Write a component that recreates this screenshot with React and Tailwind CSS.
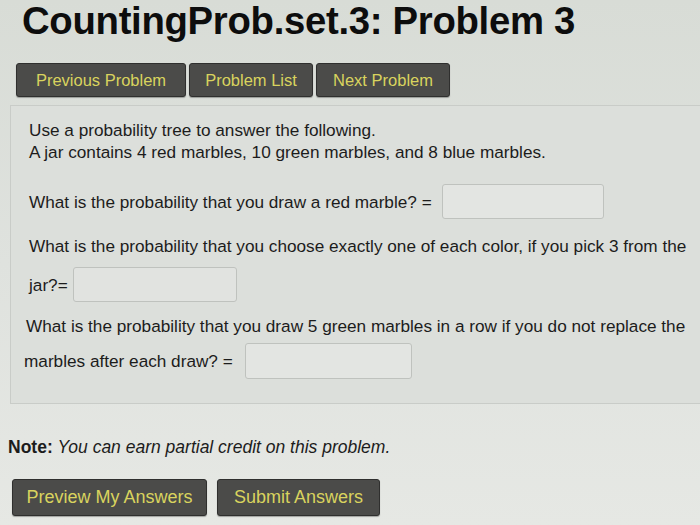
export default function App() {
  const btn =
    "bg-[#4b4b49] text-[#d9d35e] border border-[#2f2f2e] rounded-[3px] shadow-[0_1px_1px_rgba(0,0,0,0.3)]";
  return (
    <div
      className="w-[700px] h-[525px] overflow-hidden bg-gradient-to-b from-[#d8dcd6] via-[#dfe2de] to-[#e6e8e4] text-[#1c1c1c]"
      style={{ fontFamily: '"Liberation Sans", Arial, sans-serif' }}
    >
      <h1 className="pl-[22px] pt-[0px] text-[38.3px] leading-[42px] font-bold text-[#0d0d0d] tracking-[-0.3px]">
        CountingProb.set.3: Problem 3
      </h1>
      <div className="flex gap-[3px] pl-[16px] mt-[21px]">
        <button className={`${btn} w-[170px] h-[34px] text-[16.5px]`}>Previous Problem</button>
        <button className={`${btn} w-[124px] h-[34px] text-[16.5px]`}>Problem List</button>
        <button className={`${btn} w-[134px] h-[34px] text-[16.5px]`}>Next Problem</button>
      </div>
      <div className="ml-[10px] mt-[8px] h-[299px] border-t border-l border-b border-[#c9ccc8] bg-[#dcdfdb] pl-[18px] pt-[13px] text-[17.2px] leading-[22px]">
        <p>Use a probability tree to answer the following.</p>
        <p>A jar contains 4 red marbles, 10 green marbles, and 8 blue marbles.</p>
        <div className="mt-[21px] flex items-center">
          <span>What is the probability that you draw a red marble? =</span>
          <span className="ml-[10px] inline-block w-[162px] h-[35px] border border-[#bfc2be] rounded-[3px] bg-[#e3e5e2]" />
        </div>
        <p className="mt-[16px] whitespace-nowrap">
          What is the probability that you choose exactly one of each color, if you pick 3 from the
        </p>
        <div className="flex items-center mt-[10px]">
          <span>jar?=</span>
          <span className="ml-[5px] inline-block w-[164px] h-[35px] border border-[#bfc2be] rounded-[3px] bg-[#e1e3e0]" />
        </div>
        <p className="mt-[13px] -ml-[3px] whitespace-nowrap">
          What is the probability that you draw 5 green marbles in a row if you do not replace the
        </p>
        <div className="flex items-center mt-[6px] -ml-[5px]">
          <span>marbles after each draw? =</span>
          <span className="ml-[12px] inline-block w-[167px] h-[36px] border border-[#bfc2be] rounded-[3px] bg-[#e3e5e2]" />
        </div>
      </div>
      <p className="pl-[8px] mt-[32px] text-[17.5px] leading-[22px]">
        <b>Note:</b> <i>You can earn partial credit on this problem.</i>
      </p>
      <div className="flex gap-[10px] pl-[12px] mt-[21px]">
        <button className={`${btn} w-[195px] h-[37px] text-[18px]`}>Preview My Answers</button>
        <button className={`${btn} w-[163px] h-[37px] text-[18px]`}>Submit Answers</button>
      </div>
    </div>
  );
}
